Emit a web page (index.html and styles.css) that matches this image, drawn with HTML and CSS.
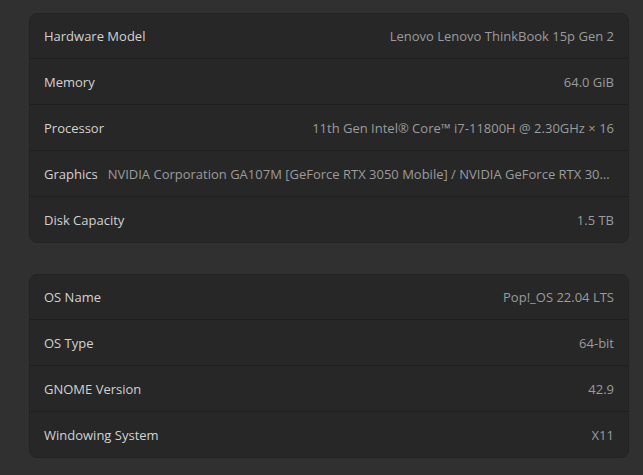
FILE: index.html
```html
<!DOCTYPE html>
<html>
<head>
<meta charset="utf-8">
<link rel="stylesheet" href="styles.css">
</head>
<body>
<main class="page">
  <section class="card">
    <div class="row"><span class="label">Hardware Model</span><span class="value">Lenovo Lenovo ThinkBook 15p Gen 2</span></div>
    <div class="row"><span class="label">Memory</span><span class="value">64.0 GiB</span></div>
    <div class="row"><span class="label">Processor</span><span class="value">11th Gen Intel® Core™ i7-11800H @ 2.30GHz × 16</span></div>
    <div class="row"><span class="label">Graphics</span><span class="value value-long">NVIDIA Corporation GA107M [GeForce RTX 3050 Mobile] / NVIDIA GeForce RTX 3050 Laptop GPU</span></div>
    <div class="row"><span class="label">Disk Capacity</span><span class="value">1.5 TB</span></div>
  </section>
  <section class="card">
    <div class="row"><span class="label">OS Name</span><span class="value">Pop!_OS 22.04 LTS</span></div>
    <div class="row"><span class="label">OS Type</span><span class="value">64-bit</span></div>
    <div class="row"><span class="label">GNOME Version</span><span class="value">42.9</span></div>
    <div class="row"><span class="label">Windowing System</span><span class="value">X11</span></div>
  </section>
</main>
</body>
</html>
```
FILE: styles.css
```css
html, body {
  margin: 0;
  padding: 0;
  background: #303030;
}
body {
  font-family: "Open Sans", "Noto Sans", sans-serif;
  font-size: 13px;
}
.page {
  display: flex;
  flex-direction: column;
  gap: 31px;
  padding: 13px 14px 0 29px;
}
.card {
  background: #272727;
  border: 1px solid #232323;
  border-radius: 8px;
  overflow: hidden;
}
.row {
  display: flex;
  align-items: center;
  justify-content: space-between;
  gap: 10px;
  height: 45px;
  padding: 0 14px;
  border-top: 1px solid #1f1f1f;
}
.row:first-child {
  border-top: none;
  height: 44px;
}
.label {
  color: #d2d2d2;
  white-space: nowrap;
  flex: none;
}
.value {
  color: #9b9b9b;
  white-space: nowrap;
  overflow: hidden;
  text-overflow: ellipsis;
  min-width: 0;
}
.value-long {
  padding-right: 3px;
}
```
